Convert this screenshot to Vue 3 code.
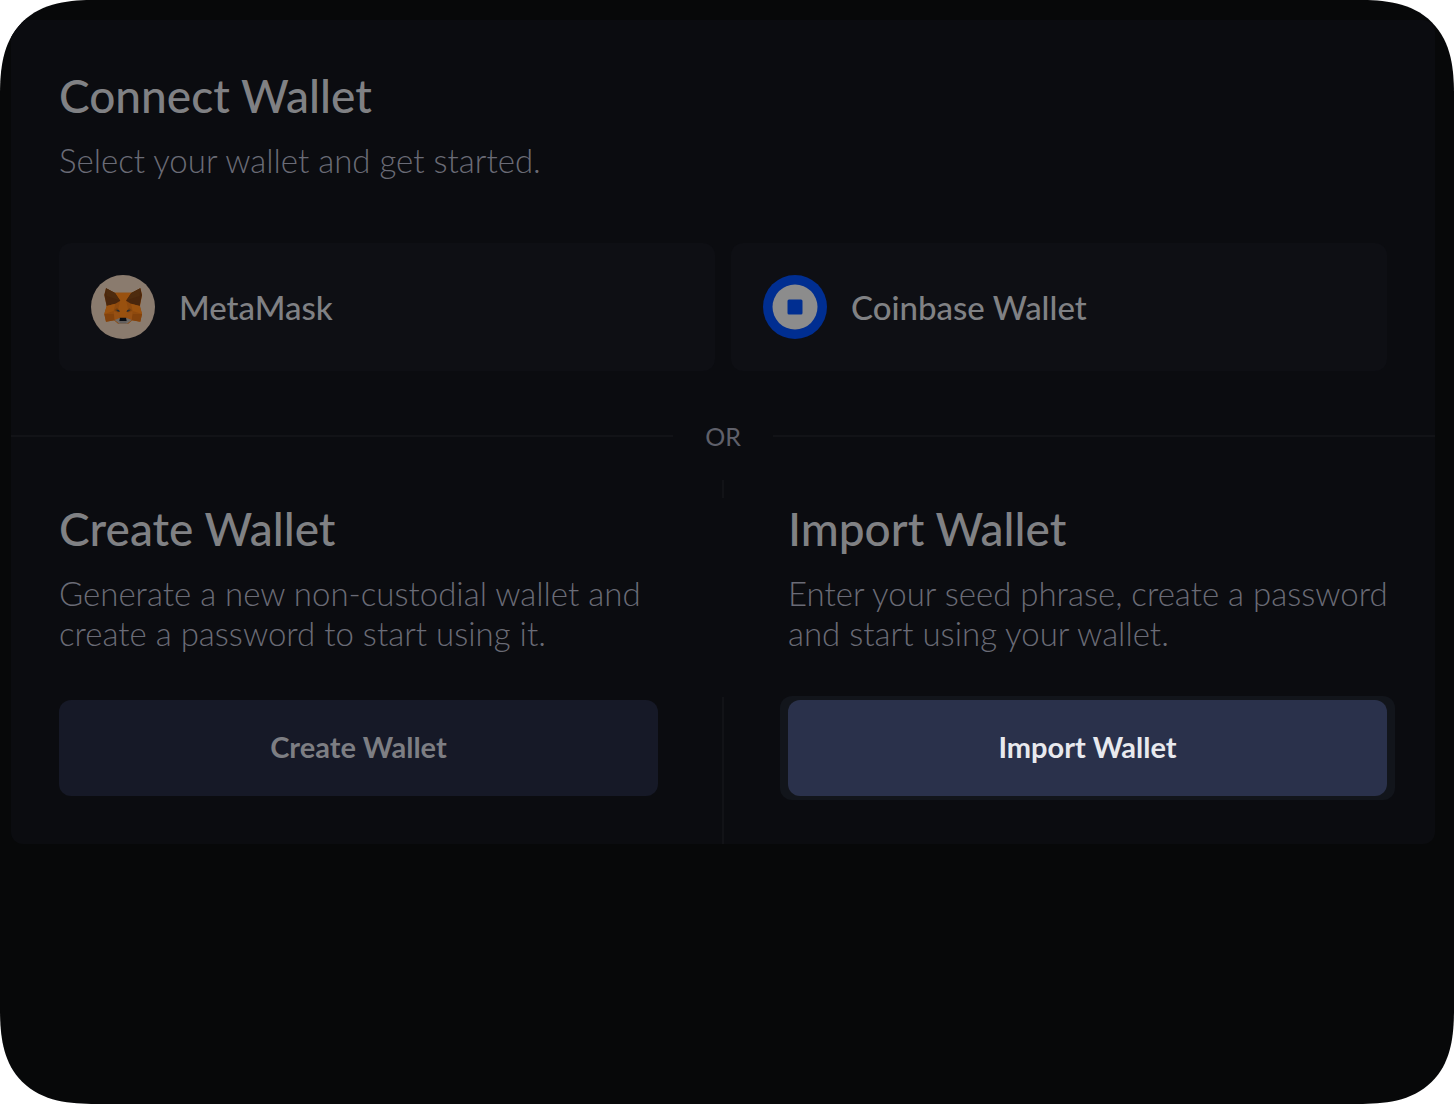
<script setup>
import { ref } from 'vue';

const wallets = ref([
	{ id: 'metamask', name: 'MetaMask' },
	{ id: 'coinbase', name: 'Coinbase Wallet' },
]);
</script>

<template>
	<main class="app">
		<div class="panel">
			<section class="connect">
				<h2 class="title">Connect Wallet</h2>
				<p class="text">Select your wallet and get started.</p>
				<div class="wallets">
					<button
						v-for="wallet in wallets"
						:key="wallet.id"
						class="wallet"
						type="button"
					>
						<svg
							v-if="wallet.id === 'metamask'"
							class="logo"
							viewBox="33 30 192 192"
							aria-hidden="true"
						>
							<circle cx="129" cy="126" r="96" fill="#8a7b6e" />
							<path d="M78 70l26 13h51l26-13 5 20-6 33 6 24-5 23-24-4-12 10h-31l-12-10-24 4-5-23 7-24-7-33z" fill="#8f4a0e" />
							<path d="M104 83h51l-16 24 6 30-5 22h-21l-5-22 6-30z" fill="#99510f" />
							<path d="M78 70l-5 20 7 33 26-7 15-9-16-23z" fill="#4a260c" />
							<path d="M181 70l5 20-7 33-26-7-15-9 16-23z" fill="#4a260c" />
							<path d="M78 70l27 14 14 22-39-13z" fill="#4e2b0e" />
							<path d="M181 70l-27 14-14 22 39-13z" fill="#4e2b0e" />
							<path d="M80 123l26-7-5 22-28 9zM179 123l-26-7 5 22 28 9z" fill="#9b520f" />
							<path d="M73 147h28l3 19-26 4zM186 147h-28l-3 19 26 4z" fill="#83420c" />
							<path d="M101 138l19 8-3 17-13 3zM158 138l-19 8 3 17 13 3z" fill="#965014" />
							<path d="M103 136l8-7 9 10-3 3zM156 136l-8-7-9 10 3 3z" fill="#75400f" />
							<path d="M110 134l7 1 2 6-9-3zM149 134l-7 1-2 6 9-3z" fill="#252c35" />
							<path d="M104 165l15-6h21l15 6-14 11h-23z" fill="#6e6a67" />
							<path d="M120 158h18l2 10h-22z" fill="#0b0e13" />
							<path d="M117 169h24l-3 5h-18z" fill="#625e5b" />
						</svg>
						<svg
							v-else
							class="logo"
							viewBox="0 0 64 64"
							aria-hidden="true"
						>
							<circle cx="32" cy="32" r="32" fill="#002e91" />
							<circle cx="32" cy="32" r="22.5" fill="#8c8c8c" />
							<rect x="24.5" y="24.5" width="15" height="15" rx="1.5" fill="#002e91" />
						</svg>
						<span>{{ wallet.name }}</span>
					</button>
				</div>
			</section>

			<div class="or"><span>OR</span></div>

			<div class="options">
				<section class="option create">
					<h2 class="title">Create Wallet</h2>
					<p class="text">
						Generate a new non-custodial wallet and<br />
						create a password to start using it.
					</p>
					<button class="action" type="button">Create Wallet</button>
				</section>
				<div class="divider"></div>
				<section class="option import">
					<h2 class="title">Import Wallet</h2>
					<p class="text">
						Enter your seed phrase, create a password<br />
						and start using your wallet.
					</p>
					<div class="highlight">
						<button class="action active" type="button">
							Import Wallet
						</button>
					</div>
				</section>
			</div>
		</div>
	</main>
</template>

<style>
body {
	margin: 0;
	background-color: #fff;
}
</style>

<style scoped>
.app {
	box-sizing: border-box;
	min-height: 100vh;
	padding: 20px 19px 20px 11px;
	border-radius: 76px;
	overflow: hidden;
	background-color: #070809;
	color: #808184;
	font-family: Lato, sans-serif;
}

@supports (corner-shape: superellipse(1.4)) {
	.app {
		border-radius: 96px;
		corner-shape: superellipse(1.4);
	}
}

.panel {
	border-radius: 12px;
	background-color: #0b0c10;
}

.connect {
	padding: 48px 48px 0;
}

.title {
	margin: 0;
	font-size: 46px;
	font-weight: 500;
	line-height: 56px;
}

.text {
	margin: 16px 0 0;
	color: #6a6b76;
	font-size: 33px;
	font-weight: 300;
	line-height: 40px;
	white-space: nowrap;
}

.wallets {
	display: grid;
	grid-template-columns: 1fr 1fr;
	gap: 16px;
	margin-top: 63px;
}

.wallet {
	display: flex;
	align-items: center;
	gap: 24px;
	height: 128px;
	padding: 0 32px;
	border: none;
	border-radius: 12px;
	background-color: #0e0f14;
	color: #808184;
	font-family: inherit;
	font-size: 33px;
	font-weight: 500;
}

.logo {
	flex: none;
	width: 64px;
	height: 64px;
}

.or {
	display: flex;
	align-items: center;
	gap: 32px;
	margin-top: 49px;
	color: #5f606a;
	font-size: 25px;
	line-height: 32px;
}

.or::before,
.or::after {
	content: '';
	flex: 1;
	height: 2px;
	background-color: #121317;
}

.options {
	display: grid;
	grid-template-columns: minmax(0, 1fr) 2px minmax(0, 1fr);
	margin-top: 28px;
}

.option {
	padding: 21px 48px 48px;
}

.create {
	padding-right: 64px;
}

.import {
	padding-left: 64px;
}

.divider {
	display: flex;
	flex-direction: column;
	justify-content: space-between;
}

.divider::before,
.divider::after {
	content: '';
	height: 18px;
	background-color: #121317;
}

.divider::after {
	height: 147px;
}

.action {
	display: block;
	width: 100%;
	height: 96px;
	margin-top: 47px;
	padding: 0 0 4px;
	border: none;
	border-radius: 12px;
	background-color: #161927;
	color: #7d7e83;
	font-family: inherit;
	font-size: 29px;
	font-weight: 700;
}

.highlight {
	margin: 43px -8px -4px;
	padding: 4px 8px;
	border-radius: 12px;
	background-color: #12151b;
}

.active {
	margin-top: 0;
	background-color: #2a314b;
	color: #e8e9ee;
}
</style>
